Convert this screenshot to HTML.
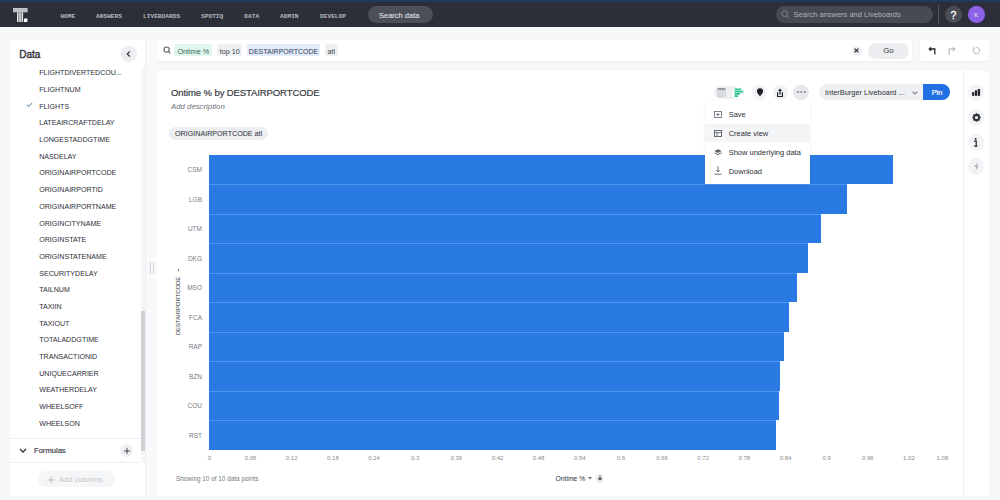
<!DOCTYPE html>
<html><head><meta charset="utf-8"><style>
*{box-sizing:border-box;margin:0;padding:0}
html,body{width:1000px;height:500px;overflow:hidden;background:#f5f7f9;font-family:"Liberation Sans",sans-serif;color:#2d3038}
.a{position:absolute}
.t{position:absolute;white-space:nowrap;line-height:10px;height:10px}
</style></head><body>
<div class="a" style="left:0;top:0;width:1000px;height:2px;background:#1f3a5e"></div>
<div class="a" style="left:0;top:2px;width:1000px;height:25px;background:#2c2f37"></div>
<svg class="a" style="left:13px;top:8px" width="15" height="14" viewBox="0 0 15 14">
<rect x="0" y="0" width="14.6" height="4.3" fill="#c4c7cd"/>
<rect x="0" y="1.4" width="14.6" height="0.5" fill="#a9adb4"/>
<rect x="0" y="2.8" width="14.6" height="0.5" fill="#a9adb4"/>
<rect x="4" y="4.3" width="1.6" height="9.7" fill="#e2e4e7"/>
<rect x="6.25" y="4.3" width="1.6" height="9.7" fill="#e2e4e7"/>
<rect x="8.5" y="4.3" width="1.6" height="9.7" fill="#e2e4e7"/>
<rect x="11" y="10.5" width="3.4" height="3.5" fill="#fff"/>
</svg>
<div class="t" style="left:60.4px;top:11.7px;font-family:'Liberation Mono',monospace;font-size:6.2px;font-weight:bold;color:#b4b7be;letter-spacing:0">HOME</div>
<div class="t" style="left:96px;top:11.7px;font-family:'Liberation Mono',monospace;font-size:6.2px;font-weight:bold;color:#b4b7be;letter-spacing:0">ANSWERS</div>
<div class="t" style="left:143px;top:11.7px;font-family:'Liberation Mono',monospace;font-size:6.2px;font-weight:bold;color:#b4b7be;letter-spacing:0">LIVEBOARDS</div>
<div class="t" style="left:201px;top:11.7px;font-family:'Liberation Mono',monospace;font-size:6.2px;font-weight:bold;color:#b4b7be;letter-spacing:0">SPOTIQ</div>
<div class="t" style="left:244.3px;top:11.7px;font-family:'Liberation Mono',monospace;font-size:6.2px;font-weight:bold;color:#b4b7be;letter-spacing:0">DATA</div>
<div class="t" style="left:280px;top:11.7px;font-family:'Liberation Mono',monospace;font-size:6.2px;font-weight:bold;color:#b4b7be;letter-spacing:0">ADMIN</div>
<div class="t" style="left:320px;top:11.7px;font-family:'Liberation Mono',monospace;font-size:6.2px;font-weight:bold;color:#b4b7be;letter-spacing:0">DEVELOP</div>
<div class="a" style="left:367.5px;top:6px;width:65px;height:16.8px;border-radius:8.4px;background:#4a4f58"></div>
<div class="t" style="left:379px;top:10.5px;font-size:7.5px;color:#dcdee2;-webkit-text-stroke:0.15px #dcdee2">Search data</div>
<div class="a" style="left:776px;top:5.7px;width:157px;height:17.4px;border-radius:9px;background:#464a53"></div>
<svg class="a" style="left:781px;top:9.8px" width="9" height="9" viewBox="0 0 9 9"><circle cx="3.8" cy="3.8" r="2.8" fill="none" stroke="#6e727a" stroke-width="1.3"/><line x1="5.9" y1="5.9" x2="7.8" y2="7.8" stroke="#6e727a" stroke-width="1.2"/></svg>
<div class="t" style="left:793.6px;top:10.2px;font-size:7.5px;color:#aeb1b8">Search answers and Liveboards</div>
<div class="a" style="left:938.2px;top:4.5px;width:1px;height:19px;background:#4f535c"></div>
<div class="a" style="left:944.8px;top:6px;width:16.8px;height:16.8px;border-radius:50%;background:#4a4e57"></div>
<div class="t" style="left:944.8px;width:17px;text-align:center;top:9.5px;font-size:10.5px;color:#fff;-webkit-text-stroke:0.3px #fff">?</div>
<div class="a" style="left:967.5px;top:5.8px;width:17.5px;height:17.5px;border-radius:50%;background:#8d62e6;box-shadow:0 0 0 0.6px #3b2f6e"></div>
<div class="t" style="left:967.5px;width:17.5px;text-align:center;top:9.6px;font-size:6px;color:#f4eefc">K</div>
<div class="a" style="left:10px;top:40px;width:135px;height:456px;background:#fff"></div>
<div class="t" style="left:19.2px;top:49px;font-size:10px;color:#33363e;-webkit-text-stroke:0.4px #33363e;line-height:12px;height:12px">Data</div>
<div class="a" style="left:120.5px;top:45.8px;width:16px;height:16px;border-radius:50%;background:#eceef1;box-shadow:0 0 2px rgba(0,0,0,0.06)"></div>
<svg class="a" style="left:125px;top:49.7px" width="8" height="8" viewBox="0 0 8 8"><path d="M4.9 1.4 L2.3 4 L4.9 6.6" fill="none" stroke="#2d3038" stroke-width="1.25"/></svg>
<div class="a" style="left:141px;top:67px;width:4px;height:395px;background:#f5f6f8"></div>
<div class="a" style="left:141px;top:311px;width:4px;height:140px;background:#cdd0d4"></div>
<div class="t" style="left:39.2px;top:68.30px;font-size:7.1px;color:#2d3038">FLIGHTDIVERTEDCOU...</div>
<div class="t" style="left:39.2px;top:84.99px;font-size:7.1px;color:#2d3038">FLIGHTNUM</div>
<div class="t" style="left:39.2px;top:101.68px;font-size:7.1px;color:#2d3038">FLIGHTS</div>
<div class="t" style="left:39.2px;top:118.37px;font-size:7.1px;color:#2d3038">LATEAIRCRAFTDELAY</div>
<div class="t" style="left:39.2px;top:135.06px;font-size:7.1px;color:#2d3038">LONGESTADDGTIME</div>
<div class="t" style="left:39.2px;top:151.75px;font-size:7.1px;color:#2d3038">NASDELAY</div>
<div class="t" style="left:39.2px;top:168.44px;font-size:7.1px;color:#2d3038">ORIGINAIRPORTCODE</div>
<div class="t" style="left:39.2px;top:185.13px;font-size:7.1px;color:#2d3038">ORIGINAIRPORTID</div>
<div class="t" style="left:39.2px;top:201.82px;font-size:7.1px;color:#2d3038">ORIGINAIRPORTNAME</div>
<div class="t" style="left:39.2px;top:218.51px;font-size:7.1px;color:#2d3038">ORIGINCITYNAME</div>
<div class="t" style="left:39.2px;top:235.20px;font-size:7.1px;color:#2d3038">ORIGINSTATE</div>
<div class="t" style="left:39.2px;top:251.89px;font-size:7.1px;color:#2d3038">ORIGINSTATENAME</div>
<div class="t" style="left:39.2px;top:268.58px;font-size:7.1px;color:#2d3038">SECURITYDELAY</div>
<div class="t" style="left:39.2px;top:285.27px;font-size:7.1px;color:#2d3038">TAILNUM</div>
<div class="t" style="left:39.2px;top:301.96px;font-size:7.1px;color:#2d3038">TAXIIN</div>
<div class="t" style="left:39.2px;top:318.65px;font-size:7.1px;color:#2d3038">TAXIOUT</div>
<div class="t" style="left:39.2px;top:335.34px;font-size:7.1px;color:#2d3038">TOTALADDGTIME</div>
<div class="t" style="left:39.2px;top:352.03px;font-size:7.1px;color:#2d3038">TRANSACTIONID</div>
<div class="t" style="left:39.2px;top:368.72px;font-size:7.1px;color:#2d3038">UNIQUECARRIER</div>
<div class="t" style="left:39.2px;top:385.41px;font-size:7.1px;color:#2d3038">WEATHERDELAY</div>
<div class="t" style="left:39.2px;top:402.10px;font-size:7.1px;color:#2d3038">WHEELSOFF</div>
<div class="t" style="left:39.2px;top:418.79px;font-size:7.1px;color:#2d3038">WHEELSON</div>
<svg class="a" style="left:26px;top:102px" width="7" height="6" viewBox="0 0 7 6"><path d="M0.8 2.6 L2.6 4.4 L6.2 0.8" fill="none" stroke="#8499b5" stroke-width="1.1"/></svg>
<div class="a" style="left:10px;top:437.5px;width:131px;height:1px;background:#eceef1"></div>
<svg class="a" style="left:19px;top:447px" width="8" height="7" viewBox="0 0 8 7"><path d="M1 2 L4 5 L7 2" fill="none" stroke="#2d3038" stroke-width="1.3"/></svg>
<div class="t" style="left:34px;top:445.5px;font-size:7.6px;color:#33363e;-webkit-text-stroke:0.15px #33363e">Formulas</div>
<div class="a" style="left:120px;top:444px;width:13px;height:13px;border-radius:50%;background:#eef0f3"></div>
<svg class="a" style="left:122.5px;top:446.5px" width="8" height="8" viewBox="0 0 8 8"><path d="M4 0.9 V7.1 M0.9 4 H7.1" fill="none" stroke="#2d3038" stroke-width="0.85"/></svg>
<div class="a" style="left:10px;top:462px;width:131px;height:1px;background:#eceef1"></div>
<div class="a" style="left:38.4px;top:471.2px;width:77px;height:16px;border-radius:8px;background:#f5f6f8"></div>
<svg class="a" style="left:46.5px;top:475.5px" width="8" height="8" viewBox="0 0 8 8"><path d="M4 0.5 V7.5 M0.5 4 H7.5" fill="none" stroke="#b5b8be" stroke-width="0.9"/></svg>
<div class="t" style="left:59px;top:474.5px;font-size:7.6px;color:#c3c6cb">Add columns</div>
<div class="a" style="left:145px;top:40px;width:12px;height:456px;background:#f8f9fa"></div>
<div class="a" style="left:145px;top:40px;width:1px;height:456px;background:#eceef1"></div>
<div class="a" style="left:150px;top:262px;width:1px;height:12px;background:#d3d5d9"></div>
<div class="a" style="left:152.5px;top:262px;width:1px;height:12px;background:#d3d5d9"></div>
<div class="a" style="left:157px;top:40px;width:755px;height:21px;background:#fff;box-shadow:0 1px 2px rgba(0,0,0,0.04)"></div>
<svg class="a" style="left:162.5px;top:46.2px" width="9" height="9" viewBox="0 0 9 9"><circle cx="3.6" cy="3.6" r="2.6" fill="none" stroke="#5b5f68" stroke-width="1.1"/><line x1="5.5" y1="5.5" x2="7.3" y2="7.3" stroke="#5b5f68" stroke-width="1.1"/></svg>
<div class="a" style="left:174.4px;top:44.3px;width:37.8px;height:12px;background:#e0f5ed;border-radius:2px"></div>
<div class="t" style="left:174.4px;top:46.6px;width:37.8px;text-align:center;font-size:7.2px;color:#36654f">Ontime %</div>
<div class="a" style="left:217px;top:44.3px;width:25.3px;height:12px;background:#eef0f3;border-radius:2px"></div>
<div class="t" style="left:217px;top:46.6px;width:25.3px;text-align:center;font-size:7.2px;color:#3a3e46">top 10</div>
<div class="a" style="left:246.7px;top:44.3px;width:73.7px;height:12px;background:#e3eaf8;border-radius:2px"></div>
<div class="t" style="left:246.7px;top:46.6px;width:73.7px;text-align:center;font-size:7.0px;color:#2e3c5e">DESTAIRPORTCODE</div>
<div class="a" style="left:324.8px;top:44.3px;width:12.8px;height:12px;background:#eef0f3;border-radius:2px"></div>
<div class="t" style="left:324.8px;top:46.6px;width:12.8px;text-align:center;font-size:7.2px;color:#3a3e46">atl</div>
<div class="a" style="left:851.7px;top:45.7px;width:10px;height:10px;border-radius:50%;background:#eef0f3"></div>
<svg class="a" style="left:854.2px;top:48.2px" width="5" height="5" viewBox="0 0 5 5"><path d="M0.6 0.6 L4.4 4.4 M4.4 0.6 L0.6 4.4" stroke="#2d3038" stroke-width="1.3"/></svg>
<div class="a" style="left:868px;top:42.8px;width:41px;height:16px;border-radius:8px;background:#eceef1"></div>
<div class="t" style="left:868px;top:46.3px;width:41px;text-align:center;font-size:7.9px;color:#3a3e46">Go</div>
<div class="a" style="left:920px;top:40px;width:69px;height:21px;background:#fff;box-shadow:0 1px 2px rgba(0,0,0,0.04)"></div>
<svg class="a" style="left:927.5px;top:46px" width="9" height="9" viewBox="0 0 9 9"><path d="M3.2 0.4 L0.3 3 L3.2 5.6 Z" fill="#23262c"/><path d="M2.5 3 H6.8 V8.6" fill="none" stroke="#23262c" stroke-width="1.3"/></svg>
<svg class="a" style="left:946.5px;top:46px" width="9" height="9" viewBox="0 0 9 9"><path d="M5.8 0.6 L8.5 3 L5.8 5.4 Z" fill="#b0b3b9"/><path d="M6.2 3 H2.2 V8.6" fill="none" stroke="#b0b3b9" stroke-width="1.1"/></svg>
<svg class="a" style="left:972px;top:46px" width="9" height="9" viewBox="0 0 9 9"><path d="M2.2 2.2 A3.2 3.2 0 1 0 4.5 1.3" fill="none" stroke="#b3b6bc" stroke-width="1"/><path d="M1.2 1 L2.6 2.6 L0.8 3.2" fill="none" stroke="#b3b6bc" stroke-width="0.9"/></svg>
<div class="a" style="left:157px;top:71px;width:832px;height:425px;background:#fff"></div>
<div class="a" style="left:963px;top:71px;width:1px;height:425px;background:#eef0f3"></div>
<div class="t" style="left:171px;top:86.5px;font-size:9.5px;letter-spacing:-0.1px;color:#3a3d45;-webkit-text-stroke:0.2px #3a3d45;line-height:12px;height:12px">Ontime % by DESTAIRPORTCODE</div>
<div class="t" style="left:171px;top:101.5px;font-size:7.8px;font-style:italic;color:#6d7179">Add description</div>
<div class="a" style="left:169px;top:126.5px;width:99px;height:13.3px;border-radius:6.7px;background:#eceef1"></div>
<div class="t" style="left:175px;top:129px;font-size:7.15px;color:#2d3038">ORIGINAIRPORTCODE atl</div>
<div class="a" style="left:714px;top:86px;width:31px;height:13px;border-radius:7px;background:#eef0f3"></div>
<div class="a" style="left:731.5px;top:85.5px;width:14px;height:14px;border-radius:50%;background:#fff"></div>
<svg class="a" style="left:717px;top:87.5px" width="9" height="9" viewBox="0 0 9 9"><rect x="0.5" y="0.3" width="8" height="1.4" fill="#6b6f78"/><path d="M0.5 3 H8.5 M0.5 5 H8.5 M0.5 7 H8.5 M3 2 V8.5 M6 2 V8.5" stroke="#c0c3c9" stroke-width="0.6" fill="none"/><rect x="0.5" y="2" width="8" height="6.5" fill="none" stroke="#c0c3c9" stroke-width="0.6"/></svg>
<svg class="a" style="left:733.5px;top:87.5px" width="10" height="10" viewBox="0 0 10 10"><rect x="0.5" y="0.5" width="6.8" height="1.75" fill="#2cc48c"/><rect x="0.5" y="2.75" width="8.8" height="1.75" fill="#2cc48c"/><rect x="0.5" y="5.0" width="5.6" height="1.75" fill="#2cc48c"/><rect x="0.5" y="7.25" width="3.6" height="1.75" fill="#2cc48c"/></svg>
<div class="a" style="left:751.8px;top:84.5px;width:15.6px;height:15.6px;border-radius:50%;background:#f1f2f5"></div>
<div class="a" style="left:772.6px;top:84.5px;width:15.6px;height:15.6px;border-radius:50%;background:#f1f2f5"></div>
<div class="a" style="left:793.4px;top:84.5px;width:15.6px;height:15.6px;border-radius:50%;background:#e6e8eb"></div>
<svg class="a" style="left:755.6px;top:87.8px" width="8" height="9" viewBox="0 0 8 9"><path d="M4 8.2 C2.5 6.6 0.9 4.9 0.9 3.3 A3.1 3.1 0 0 1 7.1 3.3 C7.1 4.9 5.5 6.6 4 8.2 Z" fill="#1f2228"/></svg>
<svg class="a" style="left:776.4px;top:87.5px" width="8" height="9" viewBox="0 0 8 9"><path d="M4 6.4 V1.5" stroke="#1f2228" stroke-width="1.2"/><path d="M2 3.1 L4 0.6 L6 3.1 Z" fill="#1f2228"/><path d="M1.6 4.2 V8.5 H6.4 V4.2" fill="none" stroke="#1f2228" stroke-width="1.2"/></svg>
<svg class="a" style="left:796.7px;top:91.2px" width="9" height="2" viewBox="0 0 9 2"><circle cx="1" cy="1" r="0.85" fill="#50545c"/><circle cx="4.4" cy="1" r="0.85" fill="#50545c"/><circle cx="7.8" cy="1" r="0.85" fill="#50545c"/></svg>
<div class="a" style="left:819px;top:84.3px;width:110px;height:16px;border-radius:8px 0 0 8px;background:#eef0f3"></div>
<div class="t" style="left:825px;top:88px;font-size:7.4px;color:#2d3038">InterBurger Liveboard ...</div>
<svg class="a" style="left:912px;top:90.8px" width="6" height="4" viewBox="0 0 6 4"><path d="M0.6 0.6 L3 3 L5.4 0.6" fill="none" stroke="#80848c" stroke-width="1.1"/></svg>
<div class="a" style="left:923px;top:84.2px;width:27.3px;height:16.3px;border-radius:0 8.2px 8.2px 0;background:#2270e6"></div>
<div class="t" style="left:923px;top:88px;width:28px;text-align:center;font-size:7.4px;color:#fff;-webkit-text-stroke:0.2px #fff">Pin</div>
<div class="a" style="left:967.6px;top:84.0px;width:16.8px;height:16.8px;border-radius:50%;background:#f3f4f6"></div>
<div class="a" style="left:967.6px;top:109.1px;width:16.8px;height:16.8px;border-radius:50%;background:#f3f4f6"></div>
<div class="a" style="left:967.6px;top:134.3px;width:16.8px;height:16.8px;border-radius:50%;background:#f3f4f6"></div>
<div class="a" style="left:967.6px;top:158.3px;width:16.8px;height:16.8px;border-radius:50%;background:#f3f4f6"></div>
<svg class="a" style="left:971.8px;top:89px" width="9" height="7" viewBox="0 0 9 7"><rect x="0" y="3.2" width="2.3" height="3.6" fill="#23262c"/><rect x="2.9" y="1.3" width="2.3" height="5.5" fill="#23262c"/><rect x="5.8" y="0" width="2.3" height="6.8" fill="#23262c"/></svg>
<svg class="a" style="left:971.5px;top:113px" width="9" height="9" viewBox="0 0 10 10"><circle cx="5" cy="5" r="2.8" fill="none" stroke="#2d3038" stroke-width="2"/><path d="M5 0.3 V2 M5 8 V9.7 M0.3 5 H2 M8 5 H9.7 M1.7 1.7 L2.9 2.9 M7.1 7.1 L8.3 8.3 M1.7 8.3 L2.9 7.1 M7.1 2.9 L8.3 1.7" stroke="#2d3038" stroke-width="1.8"/></svg>
<svg class="a" style="left:973.3px;top:137.5px" width="5.4" height="9" viewBox="0 0 6 10"><circle cx="3" cy="1.2" r="1.1" fill="#2d3038"/><path d="M1 3.5 H3.6 V8.8 M1.2 9 H5" fill="none" stroke="#2d3038" stroke-width="1.4"/></svg>
<svg class="a" style="left:972.5px;top:161.5px" width="7" height="9" viewBox="0 0 7 10"><path d="M4.8 0.2 L0.9 5.6 H3.3 L2.4 9.8 L6.2 4.2 H3.8 Z" fill="#a9acb2"/></svg>
<div class="a" style="left:209.4px;top:155px;width:684.1px;height:29.0px;background:#2a7ae3"></div>
<div class="a" style="left:209.4px;top:184px;width:637.6px;height:1px;background:#4f97f3"></div>
<div class="t" style="left:150px;width:52px;text-align:right;top:164.80px;font-size:6.5px;color:#777b83">CSM</div>
<div class="a" style="left:209.4px;top:185px;width:637.6px;height:29.0px;background:#2a7ae3"></div>
<div class="a" style="left:209.4px;top:214px;width:611.8px;height:1px;background:#4f97f3"></div>
<div class="t" style="left:150px;width:52px;text-align:right;top:194.80px;font-size:6.5px;color:#777b83">LGB</div>
<div class="a" style="left:209.4px;top:215px;width:611.8px;height:28.0px;background:#2a7ae3"></div>
<div class="a" style="left:209.4px;top:243px;width:598.6px;height:1px;background:#4f97f3"></div>
<div class="t" style="left:150px;width:52px;text-align:right;top:224.30px;font-size:6.5px;color:#777b83">UTM</div>
<div class="a" style="left:209.4px;top:244px;width:598.6px;height:29.0px;background:#2a7ae3"></div>
<div class="a" style="left:209.4px;top:273px;width:587.8px;height:1px;background:#4f97f3"></div>
<div class="t" style="left:150px;width:52px;text-align:right;top:253.80px;font-size:6.5px;color:#777b83">DKG</div>
<div class="a" style="left:209.4px;top:274px;width:587.8px;height:28.0px;background:#2a7ae3"></div>
<div class="a" style="left:209.4px;top:302px;width:579.9px;height:1px;background:#4f97f3"></div>
<div class="t" style="left:150px;width:52px;text-align:right;top:283.30px;font-size:6.5px;color:#777b83">MSO</div>
<div class="a" style="left:209.4px;top:303px;width:579.9px;height:29.0px;background:#2a7ae3"></div>
<div class="a" style="left:209.4px;top:332px;width:575.0px;height:1px;background:#4f97f3"></div>
<div class="t" style="left:150px;width:52px;text-align:right;top:312.80px;font-size:6.5px;color:#777b83">FCA</div>
<div class="a" style="left:209.4px;top:333px;width:575.0px;height:28.0px;background:#2a7ae3"></div>
<div class="a" style="left:209.4px;top:361px;width:570.6px;height:1px;background:#4f97f3"></div>
<div class="t" style="left:150px;width:52px;text-align:right;top:342.30px;font-size:6.5px;color:#777b83">RAP</div>
<div class="a" style="left:209.4px;top:362px;width:570.6px;height:29.0px;background:#2a7ae3"></div>
<div class="a" style="left:209.4px;top:391px;width:569.8px;height:1px;background:#4f97f3"></div>
<div class="t" style="left:150px;width:52px;text-align:right;top:371.80px;font-size:6.5px;color:#777b83">BZN</div>
<div class="a" style="left:209.4px;top:392px;width:569.8px;height:28.0px;background:#2a7ae3"></div>
<div class="a" style="left:209.4px;top:420px;width:566.2px;height:1px;background:#4f97f3"></div>
<div class="t" style="left:150px;width:52px;text-align:right;top:401.30px;font-size:6.5px;color:#777b83">COU</div>
<div class="a" style="left:209.4px;top:421px;width:566.2px;height:28.6px;background:#2a7ae3"></div>
<div class="t" style="left:150px;width:52px;text-align:right;top:430.60px;font-size:6.5px;color:#777b83">RST</div>
<div class="t" style="left:178.2px;top:305.6px;transform:translate(-50%,-50%) rotate(-90deg);font-size:5.9px;color:#2d3038">DESTAIRPORTCODE</div>
<div class="a" style="left:177.6px;top:269px;width:1.2px;height:2px;background:#6b6f78"></div>
<div class="t" style="left:189.4px;width:40px;text-align:center;top:453px;font-size:6px;color:#888b92">0</div>
<div class="t" style="left:230.6px;width:40px;text-align:center;top:453px;font-size:6px;color:#888b92">0.06</div>
<div class="t" style="left:271.7px;width:40px;text-align:center;top:453px;font-size:6px;color:#888b92">0.12</div>
<div class="t" style="left:312.9px;width:40px;text-align:center;top:453px;font-size:6px;color:#888b92">0.18</div>
<div class="t" style="left:354.0px;width:40px;text-align:center;top:453px;font-size:6px;color:#888b92">0.24</div>
<div class="t" style="left:395.1px;width:40px;text-align:center;top:453px;font-size:6px;color:#888b92">0.3</div>
<div class="t" style="left:436.3px;width:40px;text-align:center;top:453px;font-size:6px;color:#888b92">0.36</div>
<div class="t" style="left:477.5px;width:40px;text-align:center;top:453px;font-size:6px;color:#888b92">0.42</div>
<div class="t" style="left:518.6px;width:40px;text-align:center;top:453px;font-size:6px;color:#888b92">0.48</div>
<div class="t" style="left:559.8px;width:40px;text-align:center;top:453px;font-size:6px;color:#888b92">0.54</div>
<div class="t" style="left:600.9px;width:40px;text-align:center;top:453px;font-size:6px;color:#888b92">0.6</div>
<div class="t" style="left:642.0px;width:40px;text-align:center;top:453px;font-size:6px;color:#888b92">0.66</div>
<div class="t" style="left:683.2px;width:40px;text-align:center;top:453px;font-size:6px;color:#888b92">0.72</div>
<div class="t" style="left:724.3px;width:40px;text-align:center;top:453px;font-size:6px;color:#888b92">0.78</div>
<div class="t" style="left:765.5px;width:40px;text-align:center;top:453px;font-size:6px;color:#888b92">0.84</div>
<div class="t" style="left:806.6px;width:40px;text-align:center;top:453px;font-size:6px;color:#888b92">0.9</div>
<div class="t" style="left:847.8px;width:40px;text-align:center;top:453px;font-size:6px;color:#888b92">0.96</div>
<div class="t" style="left:888.9px;width:40px;text-align:center;top:453px;font-size:6px;color:#888b92">1.02</div>
<div class="t" style="left:922.4px;width:40px;text-align:center;top:453px;font-size:6px;color:#888b92">1.08</div>
<div class="t" style="left:176px;top:473.8px;font-size:6.4px;color:#767a82">Showing 10 of 10 data points</div>
<div class="t" style="left:555.6px;top:473.5px;font-size:6.75px;color:#2d3038">Ontime %</div>
<svg class="a" style="left:587.8px;top:477px" width="4" height="3" viewBox="0 0 4 3"><path d="M0 0 H4 L2 2.5 Z" fill="#6b6f78"/></svg>
<div class="a" style="left:595.2px;top:473.8px;width:8.8px;height:8.8px;border-radius:50%;background:#eef0f3"></div>
<svg class="a" style="left:596.6px;top:475.2px" width="6" height="6" viewBox="0 0 6 6"><path d="M3 0.5 V5 M1 3 L3 5.2 L5 3" fill="none" stroke="#2d3038" stroke-width="1"/></svg>
<div class="a" style="left:705px;top:101px;width:105px;height:82.7px;background:#fff;box-shadow:0 1px 3px rgba(0,0,0,0.07)"></div>
<div class="a" style="left:705.4px;top:124.3px;width:104.5px;height:18px;background:#f4f5f7"></div>
<div class="t" style="left:728.7px;top:110.2px;font-size:7.5px;color:#2d3038">Save</div>
<div class="t" style="left:728.7px;top:129.1px;font-size:7.5px;color:#2d3038">Create view</div>
<div class="t" style="left:728.7px;top:148.0px;font-size:7.5px;color:#2d3038">Show underlying data</div>
<div class="t" style="left:728.7px;top:166.5px;font-size:7.5px;color:#2d3038">Download</div>
<svg class="a" style="left:714px;top:111.3px" width="8" height="7" viewBox="0 0 8 7"><rect x="0.45" y="0.45" width="7" height="6.1" fill="none" stroke="#6b6f78" stroke-width="0.85"/><path d="M3.95 1.8 V5.2 M2.2 3.5 H5.7" stroke="#6b6f78" stroke-width="0.85"/></svg>
<svg class="a" style="left:714px;top:130px" width="8" height="7" viewBox="0 0 8 7"><rect x="0.45" y="0.45" width="7" height="6.1" fill="none" stroke="#5b5f68" stroke-width="0.9"/><path d="M0.5 2.6 H7.5 M3 2.6 V6.5" stroke="#5b5f68" stroke-width="0.8"/></svg>
<svg class="a" style="left:714px;top:148.8px" width="8" height="7" viewBox="0 0 8 7"><path d="M4 0.3 L7.6 2.1 L4 3.9 L0.4 2.1 Z" fill="#5b5f68"/><path d="M0.5 3.8 L4 5.6 L7.5 3.8" fill="none" stroke="#5b5f68" stroke-width="1"/></svg>
<svg class="a" style="left:714px;top:166px" width="8" height="9" viewBox="0 0 8 9"><path d="M4 0.3 V6 M2.2 4.2 L4 6 L5.8 4.2 M0.6 8.2 H7.4" fill="none" stroke="#5b5f68" stroke-width="0.9"/></svg>
</body></html>
